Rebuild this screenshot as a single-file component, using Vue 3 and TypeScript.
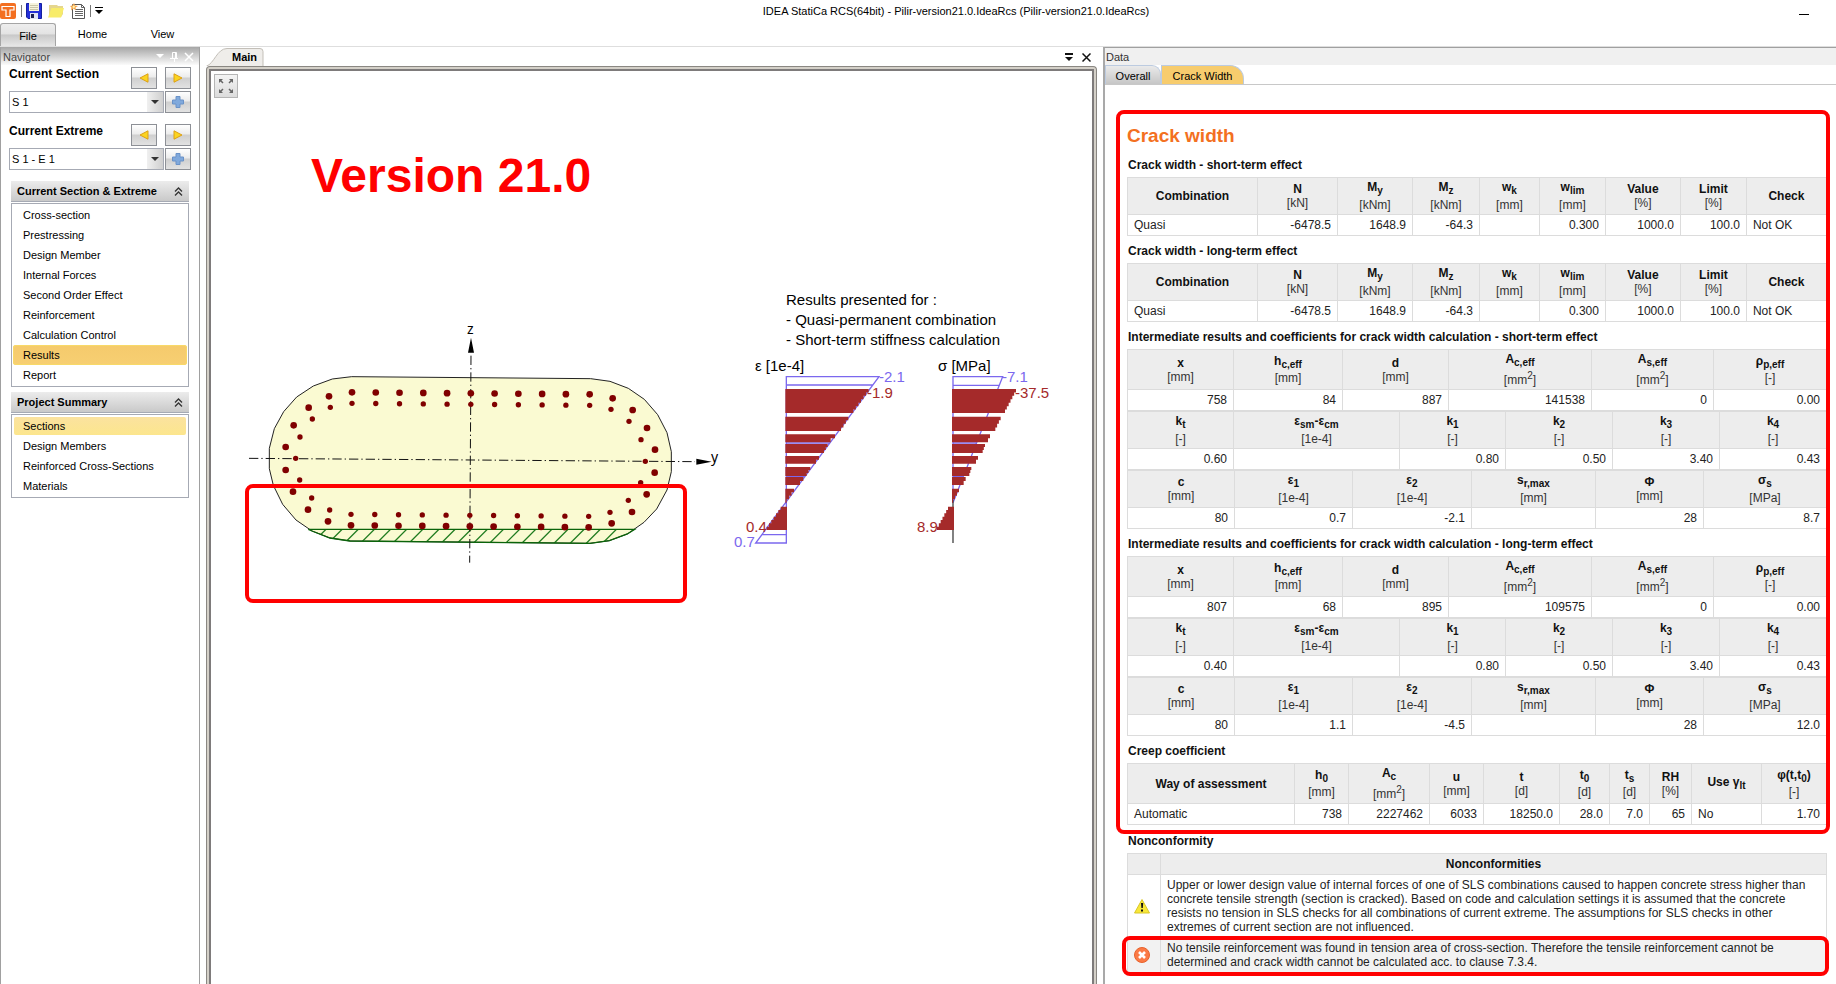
<script setup lang="ts">
import { ref } from 'vue'

type Point = [number, number]
interface Column { name: string; unit?: string; width: number }
interface ResultTable { columns: Column[]; row: string[] }
interface ResultSection { title: string; tables: ResultTable[] }

const section = ref('S 1')
const extreme = ref('S 1 - E 1')

const groups = [
  {
    title: 'Current Section & Extreme',
    active: 'Results',
    style: 'strong',
    items: ['Cross-section', 'Prestressing', 'Design Member', 'Internal Forces', 'Second Order Effect', 'Reinforcement', 'Calculation Control', 'Results', 'Report'],
  },
  {
    title: 'Project Summary',
    active: 'Sections',
    style: 'soft',
    items: ['Sections', 'Design Members', 'Reinforced Cross-Sections', 'Materials'],
  },
]

// Subscripts are written between tildes, superscripts between carets.
function parts(text: string): { text: string; kind: string }[] {
  return text
    .split(/(~[^~]+~|\^[^^]+\^)/)
    .filter((t) => t !== '')
    .map((t) => {
      if (t[0] === '~') return { text: t.slice(1, -1), kind: 'sub' }
      if (t[0] === '^') return { text: t.slice(1, -1), kind: 'sup' }
      return { text: t, kind: 'span' }
    })
}

function columns(...defs: [string, string, number][]): Column[] {
  return defs.map(([name, unit, width]) => ({ name, unit, width }))
}

function share(table: ResultTable, width: number): string {
  const total = table.columns.reduce((sum, c) => sum + c.width, 0)
  return `${(width / total) * 100}%`
}

const crackColumns = columns(
  ['Combination', '', 130], ['N', 'kN', 80], ['M~y~', 'kNm', 75], ['M~z~', 'kNm', 67], ['w~k~', 'mm', 60],
  ['w~lim~', 'mm', 66], ['Value', '%', 75], ['Limit', '%', 66], ['Check', '', 80],
)
const geometryColumns = columns(
  ['x', 'mm', 106], ['h~c,eff~', 'mm', 109], ['d', 'mm', 106], ['A~c,eff~', 'mm^2^', 143], ['A~s,eff~', 'mm^2^', 122], ['ρ~p,eff~', '-', 113],
)
const factorColumns = columns(
  ['k~t~', '-', 106], ['ε~sm~-ε~cm~', '1e-4', 166], ['k~1~', '-', 106], ['k~2~', '-', 107], ['k~3~', '-', 107], ['k~4~', '-', 107],
)
const strainColumns = columns(
  ['c', 'mm', 107], ['ε~1~', '1e-4', 118], ['ε~2~', '1e-4', 119], ['s~r,max~', 'mm', 124], ['Φ', 'mm', 108], ['σ~s~', 'MPa', 123],
)
const creepColumns = columns(
  ['Way of assessment', '', 167], ['h~0~', 'mm', 54], ['A~c~', 'mm^2^', 81], ['u', 'mm', 54], ['t', 'd', 76], ['t~0~', 'd', 50],
  ['t~s~', 'd', 40], ['RH', '%', 42], ['Use γ~lt~', '', 70], ['φ(t,t~0~)', '-', 65],
)
const crackRow = ['Quasi', '-6478.5', '1648.9', '-64.3', '', '0.300', '1000.0', '100.0', 'Not OK']

const sections: ResultSection[] = [
  { title: 'Crack width - short-term effect', tables: [{ columns: crackColumns, row: crackRow }] },
  { title: 'Crack width - long-term effect', tables: [{ columns: crackColumns, row: crackRow }] },
  {
    title: 'Intermediate results and coefficients for crack width calculation - short-term effect',
    tables: [
      { columns: geometryColumns, row: ['758', '84', '887', '141538', '0', '0.00'] },
      { columns: factorColumns, row: ['0.60', '', '0.80', '0.50', '3.40', '0.43'] },
      { columns: strainColumns, row: ['80', '0.7', '-2.1', '', '28', '8.7'] },
    ],
  },
  {
    title: 'Intermediate results and coefficients for crack width calculation - long-term effect',
    tables: [
      { columns: geometryColumns, row: ['807', '68', '895', '109575', '0', '0.00'] },
      { columns: factorColumns, row: ['0.40', '', '0.80', '0.50', '3.40', '0.43'] },
      { columns: strainColumns, row: ['80', '1.1', '-4.5', '', '28', '12.0'] },
    ],
  },
  { title: 'Creep coefficient', tables: [{ columns: creepColumns, row: ['Automatic', '738', '2227462', '6033', '18250.0', '28.0', '7.0', '65', 'No', '1.70'] }] },
]

const isTall = (table: ResultTable) => table.columns.some((c) => c.unit === 'mm^2^')
const isNumber = (value: string) => /^-?[\d.]+$/.test(value)

// Reinforcement bars of the section: straight runs and rounded ends.
const run = (x: number, y: number): Point[] => Array.from({ length: 11 }, (_, i) => [x + 71.3 * i, y + 0.6 * i] as Point)
const largeBars: Point[] = [
  ...run(336, 277), ...run(333, 676),
  [267, 289], [206, 323], [161, 376], [137, 441], [137, 510], [159, 575], [204, 629], [264, 664],
  [1118, 295], [1178, 330], [1221, 384], [1245, 449], [1244, 518], [1220, 583], [1176, 636], [1115, 670],
]
const smallBars: Point[] = [
  ...run(336, 310), ...run(333, 643),
  [271, 322], [217, 357], [180, 411], [167, 475], [179, 540], [215, 594], [269, 630],
  [1113, 328], [1167, 364], [1203, 419], [1216, 484], [1202, 548], [1165, 601], [1110, 637],
]
const hatch = Array.from({ length: 19 }, (_, i) => 258 + 48.4 * i)

// A block of stepped bars between an axis and a sloping edge.
function block(axis: number, y0: number, y1: number, x0: number, x1: number): string {
  const steps = Math.max(2, Math.round((y1 - y0) / 10))
  const points: string[] = [`${axis},${y0}`]
  for (let i = 0; i < steps; i++) {
    const x = x0 + ((x1 - x0) * i) / (steps - 1)
    points.push(`${x},${y0 + ((y1 - y0) * i) / steps}`, `${x},${y0 + ((y1 - y0) * (i + 1)) / steps}`)
  }
  points.push(`${axis},${y1}`)
  return points.join(' ')
}
const bands: Point[] = [[327, 399], [410, 453], [463, 487], [492, 519], [528, 551], [561, 588], [591, 615], [626, 668]]
const strainEdges: Point[] = [[446, 400], [385, 363], [345, 332], [323, 312], [297, 288], [271, 260], [250, 240], [222, 200]]
const stressEdges: Point[] = [[888, 855], [842, 826], [810, 804], [795, 788], [774, 768], [754, 748], [737, 731], [717, 699]]
const blocks = [
  ...bands.map(([a, b], i) => block(196, a, b, ...strainEdges[i])),
  ...bands.map(([a, b], i) => block(696, a, b, ...stressEdges[i])),
  block(201, 680, 750, 182, 140),
  block(702, 680, 750, 684, 651),
]
</script>

<template>
  <div class="app">
    <header class="titlebar">
      <div class="quick">
        <svg class="ico" width="16" height="16" viewBox="0 0 16 16">
          <rect width="16" height="16" rx="2" fill="#f36f21" />
          <path d="M2 3.500h12v3.500h-4v6.500h-4v-6.500h-4z" fill="none" stroke="#fff" stroke-width="1.200" />
        </svg>
        <i class="sep"></i>
        <button class="tool" aria-label="Save">
          <svg width="16" height="16" viewBox="0 0 16 16">
            <path d="M.5.5h15v15H2L.5 14z" fill="#2430d8" stroke="#1420a0" />
            <rect x="3" y="0" width="10" height="8" fill="#f6f3dc" />
            <path d="M4 2.500h8M4 4.500h8M4 6.500h8" stroke="#c9c6a8" />
            <rect x="4" y="10" width="8" height="6" fill="#dfe3f4" />
            <rect x="5" y="11" width="3" height="4" fill="#1b1f50" />
          </svg>
        </button>
        <button class="tool" aria-label="Open">
          <svg width="16" height="16" viewBox="0 0 16 16">
            <path d="M1 2h8l1 1h5v8l-2 3H1z" fill="#e5d68e" />
            <path d="M3.500 5H16l-3 9.500H0z" fill="#f8ec6a" />
          </svg>
        </button>
        <button class="tool" aria-label="Report">
          <svg width="16" height="16" viewBox="0 0 16 16">
            <path d="M2.500 1.500h9l3 3v11h-12z" fill="#fff" stroke="#555" />
            <path d="M11.500 1.500v3h3M5 6.500h8M5 8.500h8M5 10.500h8M5 12.500h8" fill="none" stroke="#666" />
            <path d="M4 0l1 2.500L8 3 5.500 4.500 6 7.500 3.500 5.500 1 7.500 1.500 4.500 0 3l2.500-.5z" fill="#f7a64a" />
            <circle cx="3.700" cy="3.800" r="1.200" fill="#fff3b0" />
          </svg>
        </button>
        <i class="sep"></i>
        <button class="tool more" aria-label="Customize toolbar">
          <svg width="8" height="8" viewBox="0 0 8 8"><path d="M0 0h8v1H0zM0 3h8L4 7z" fill="#000" /></svg>
        </button>
      </div>
      <h1 class="caption">IDEA StatiCa RCS(64bit) - Pilir-version21.0.IdeaRcs (Pilir-version21.0.IdeaRcs)</h1>
      <button class="minimize" aria-label="Minimize"><i></i></button>
    </header>

    <nav class="ribbon">
      <button class="file">File</button>
      <button class="tab">Home</button>
      <button class="tab">View</button>
    </nav>

    <div class="workspace">
      <aside class="navigator">
        <div class="panel-head">
          <span>Navigator</span>
          <span class="head-icons">
            <svg width="38" height="10" viewBox="0 0 38 10" fill="none" stroke="#fff">
              <path d="M0 2h8L4 6z" fill="#fff" stroke="none" />
              <path d="M16.500 6V.5h4V6M14 6.500h8M18.500 7v3M19.500 1v5" />
              <path d="M29 1l8 8M37 1l-8 8" stroke-width="1.500" />
            </svg>
          </span>
        </div>
        <div class="picker">
          <label for="section">Current Section</label>
          <div class="steps">
            <button aria-label="Previous section"><svg width="10" height="10" viewBox="0 0 10 10"><path d="M9 .8v8.400L1 5z" fill="#fbd420" stroke="#dca018" /></svg></button>
            <button aria-label="Next section"><svg width="10" height="10" viewBox="0 0 10 10"><path d="M1 .8v8.400L9 5z" fill="#fbd420" stroke="#dca018" /></svg></button>
          </div>
          <div class="drop">
            <select id="section" v-model="section"><option>S 1</option></select>
            <i class="arrow"></i>
          </div>
          <button aria-label="Add section"><svg width="14" height="14" viewBox="0 0 14 14"><path d="M5 1.500h4v3.500h3.500v4H9v3.500H5V9H1.500V5H5z" fill="#80a9dc" stroke="#6a92c8" /></svg></button>
        </div>
        <div class="picker">
          <label for="extreme">Current Extreme</label>
          <div class="steps">
            <button aria-label="Previous extreme"><svg width="10" height="10" viewBox="0 0 10 10"><path d="M9 .8v8.400L1 5z" fill="#fbd420" stroke="#dca018" /></svg></button>
            <button aria-label="Next extreme"><svg width="10" height="10" viewBox="0 0 10 10"><path d="M1 .8v8.400L9 5z" fill="#fbd420" stroke="#dca018" /></svg></button>
          </div>
          <div class="drop">
            <select id="extreme" v-model="extreme"><option>S 1 - E 1</option></select>
            <i class="arrow"></i>
          </div>
          <button aria-label="Add extreme"><svg width="14" height="14" viewBox="0 0 14 14"><path d="M5 1.500h4v3.500h3.500v4H9v3.500H5V9H1.500V5H5z" fill="#80a9dc" stroke="#6a92c8" /></svg></button>
        </div>
        <section v-for="group in groups" :key="group.title" class="group">
          <button class="group-head">
            <span>{{ group.title }}</span>
            <svg width="9" height="9" viewBox="0 0 9 9"><path d="M1 4.500L4.500 1 8 4.500M1 8.500L4.500 5 8 8.500" fill="none" stroke="#333" stroke-width="1.300" /></svg>
          </button>
          <ul>
            <li v-for="item in group.items" :key="item">
              <a href="#" :class="item === group.active ? group.style : ''">{{ item }}</a>
            </li>
          </ul>
        </section>
      </aside>

      <main class="document">
        <div class="doc-tabs">
          <button class="doc-tab">
            <svg class="tab-shape" width="58" height="19" viewBox="0 0 58 19">
              <path d="M.5 19C8 17 11 1.500 21 1.500h33q3 0 3 3V19" fill="#efedea" stroke="#c3bfb8" />
            </svg>
            <span>Main</span>
          </button>
          <div class="doc-actions">
            <button aria-label="Window list"><svg width="8" height="9" viewBox="0 0 8 9"><path d="M0 0h8v2H0zM0 4h8L4 8z" fill="#111" /></svg></button>
            <button aria-label="Close"><svg width="9" height="9" viewBox="0 0 9 9"><path d="M.5.5l8 8M8.500.5l-8 8" stroke="#111" stroke-width="1.500" /></svg></button>
          </div>
        </div>
        <div class="frame">
          <div class="canvas">
            <button class="fit" aria-label="Zoom all">
              <svg width="16" height="16" viewBox="0 0 16 16" fill="#666" stroke="#666">
                <path d="M1 1h4L1 5zM15 1h-4l4 4zM1 15h4l-4-4zM15 15h-4l4-4z" stroke="none" />
                <path d="M2 2l3 3M14 2l-3 3M2 14l3-3M14 14l-3-3" stroke-width="1.500" />
              </svg>
            </button>
            <svg class="drawing" viewBox="211 71 881 913">
              <defs>
                <clipPath id="tension"><path d="M205 688H1184L1162 702 1108 722 1050 730 330 723 270 714 216 693z" /></clipPath>
              </defs>
              <text class="version" x="311" y="192">Version 21.0</text>
              <g transform="translate(240 300) scale(.33333)">
                <path
                  d="M335 230L1052 236 1110 244 1165 265 1213 298 1253 344 1281 398 1294 455V515L1281 570 1250 627 1212 667 1162 702 1108 722 1050 730 330 723 270 714 216 693 168 660 128 613 100 556 88 506V445L103 386 131 335 170 291 220 258 277 237z"
                  fill="#fafad2" stroke="#222" stroke-width="3"
                />
                <g clip-path="url(#tension)" stroke="#1e7b1e" stroke-width="4">
                  <path v-for="x in hatch" :key="x" :d="`M${x} 688l-46 46`" />
                </g>
                <path d="M205 688H1184L1162 702 1108 722 1050 730 330 723 270 714 216 693z" fill="none" stroke="#0a640a" stroke-width="4" />
                <g stroke="#111" stroke-width="3" stroke-dasharray="28 9 4 9">
                  <path d="M693 167L689 788" />
                  <path d="M27 475L1365 485" />
                </g>
                <path d="M693 113l-9 45h18zM1415 485l-46-9v18z" />
                <g fill="#800000">
                  <circle v-for="([x, y], i) in largeBars" :key="`l${i}`" :cx="x" :cy="y" r="10" />
                  <circle v-for="([x, y], i) in smallBars" :key="`s${i}`" :cx="x" :cy="y" r="8" />
                </g>
              </g>
              <g class="axis-name">
                <text x="467" y="334">z</text>
                <text x="711" y="462">y</text>
              </g>
              <rect x="247" y="486" width="438" height="115" rx="6" fill="none" stroke="#f00" stroke-width="4" />
              <g transform="translate(720 280) scale(.33333)">
                <g fill="none" stroke="#7b68ee" stroke-width="4">
                  <path d="M199 290H477L107 789H199zM199 315H459M199 489H330M199 590H254M199 764H126" />
                  <path d="M699 668V290H848zM699 316H838M699 489H770M699 590H730" />
                </g>
                <path d="M699 660V789" stroke="#444" stroke-width="4" />
                <polygon v-for="(points, i) in blocks" :key="i" :points="points" fill="#a52a2a" />
              </g>
              <g class="notes">
                <text x="786" y="305">Results presented for :</text>
                <text x="786" y="325">- Quasi-permanent combination</text>
                <text x="786" y="345">- Short-term stiffness calculation</text>
                <text x="755" y="371">ε [1e-4]</text>
                <text x="938" y="371">σ [MPa]</text>
                <g fill="#7b68ee">
                  <text x="879" y="382">-2.1</text>
                  <text x="734" y="547">0.7</text>
                  <text x="1002" y="382">-7.1</text>
                </g>
                <g fill="#a52a2a">
                  <text x="867" y="398">-1.9</text>
                  <text x="746" y="532">0.4</text>
                  <text x="1015" y="398">-37.5</text>
                  <text x="917" y="532">8.9</text>
                </g>
              </g>
            </svg>
          </div>
        </div>
      </main>

      <section class="data">
        <div class="data-head">Data</div>
        <div class="data-tabs">
          <button class="data-tab">Overall</button>
          <button class="data-tab current">Crack Width</button>
        </div>
        <div class="data-body">
          <div class="report">
            <h2>Crack width</h2>
            <template v-for="part in sections" :key="part.title">
              <h3>{{ part.title }}</h3>
              <table v-for="(table, t) in part.tables" :key="t" :class="{ tall: isTall(table) }">
                <colgroup>
                  <col v-for="(column, c) in table.columns" :key="c" :style="{ width: share(table, column.width) }" />
                </colgroup>
                <thead>
                  <tr>
                    <th v-for="(column, c) in table.columns" :key="c" scope="col">
                      <component :is="p.kind" v-for="(p, i) in parts(column.name)" :key="i">{{ p.text }}</component>
                      <div v-if="column.unit" class="unit">[<component :is="p.kind" v-for="(p, i) in parts(column.unit)" :key="i">{{ p.text }}</component>]</div>
                    </th>
                  </tr>
                </thead>
                <tbody>
                  <tr>
                    <td v-for="(value, v) in table.row" :key="v" :class="{ number: isNumber(value) }">{{ value }}</td>
                  </tr>
                </tbody>
              </table>
            </template>
            <div class="mark mark-report"></div>
          </div>
          <div class="issues">
            <h3>Nonconformity</h3>
            <table>
              <colgroup><col class="icon-col" /><col /></colgroup>
              <thead>
                <tr><th></th><th scope="col">Nonconformities</th></tr>
              </thead>
              <tbody>
                <tr>
                  <td class="icon">
                    <svg width="16" height="16" viewBox="0 0 16 16">
                      <path d="M8 1.500L15.500 15H.5z" fill="#f8e739" stroke="#d8c62a" stroke-linejoin="round" />
                      <path d="M7 5h2.200l-.4 5H7.400zM7 11.500h2v2H7z" fill="#111" />
                    </svg>
                  </td>
                  <td>Upper or lower design value of internal forces of one of SLS combinations caused to happen concrete stress higher than concrete tensile strength (section is cracked). Based on code and calculation settings it is assumed that the concrete resists no tension in SLS checks for all combinations of current extreme. The assumptions for SLS checks in other extremes of current section are not influenced.</td>
                </tr>
                <tr class="alt">
                  <td class="icon">
                    <svg width="16" height="16" viewBox="0 0 16 16">
                      <circle cx="8" cy="8" r="7.500" fill="#fb7a45" stroke="#e8622c" />
                      <path d="M5 5l6 6M11 5l-6 6" stroke="#fff" stroke-width="2.600" />
                    </svg>
                  </td>
                  <td>No tensile reinforcement was found in tension area of cross-section. Therefore the tensile reinforcement cannot be determined and crack width cannot be calculated acc. to clause 7.3.4.</td>
                </tr>
              </tbody>
            </table>
            <div class="mark mark-issue"></div>
          </div>
        </div>
      </section>
    </div>
  </div>
</template>

<style>
body { margin: 0; background: #fff; overflow: hidden; }
</style>

<style scoped>
.app { display: flex; flex-direction: column; height: 100vh; overflow: hidden; background: #fff; color: #000; font: 11px/14px "Liberation Sans", Arial, sans-serif; }
.app *, .app *::before { box-sizing: border-box; }
button { margin: 0; padding: 0; border: 0; background: none; font: inherit; color: inherit; }
svg { display: block; }

.titlebar { display: grid; grid-template-columns: 1fr auto 1fr; align-items: start; height: 23px; }
.quick { display: flex; align-items: center; padding-top: 3px; height: 19px; }
.sep { width: 1px; height: 12px; margin: 0 4px 0 5px; background: #777; }
.tool { margin-right: 6px; width: 16px; height: 16px; }
.tool + .sep { margin-left: -2px; }
.more { width: 8px; height: 8px; }
.caption { margin: 0; padding: 4px 0 0 76px; font-size: 11px; font-weight: 400; }
.minimize { justify-self: end; width: 34px; height: 20px; margin-right: 15px; display: flex; justify-content: center; align-items: center; }
.minimize i { width: 10px; height: 1px; margin-top: 8px; background: #000; }

.ribbon { display: flex; height: 24px; border-bottom: 1px solid #dedede; }
.file { width: 56px; border: 1px solid #a5a5a5; border-bottom: 0; border-radius: 3px 3px 0 0; background: linear-gradient(#eee, #e3e3e3 45%, #c9c9c9 50%, #e6e6e6); padding-top: 2px; }
.tab { margin-left: 23px; padding-bottom: 1px; width: 27px; height: 22px; display: flex; justify-content: center; align-items: center; }
.tab + .tab { margin-left: 43px; }

.workspace { flex: 1; min-height: 0; display: grid; grid-template-columns: 200px minmax(0, 903fr) minmax(0, 733fr); }

.navigator { border: 1px solid #a0a0a0; border-width: 0 1px; }
.panel-head { display: flex; justify-content: space-between; align-items: center; height: 18px; padding: 2px 5px 0 2px; background: linear-gradient(#a6a6a6, #fbfbfb); color: #444; }
.picker { display: grid; grid-template-columns: 1fr 26px; gap: 2px 1px; padding: 2px 8px 9px 8px; }
.picker label { grid-column: 1; grid-row: 1; font-size: 12px; font-weight: 700; }
.steps { grid-column: 1 / 3; grid-row: 1; justify-self: end; display: flex; gap: 8px; }
.picker button { display: flex; justify-content: center; align-items: center; width: 26px; height: 22px; border: 1px solid #8d9096; background: linear-gradient(#fff, #ececec 45%, #cfcfcf 50%, #e2e2e2); }
.drop { position: relative; height: 22px; }
.drop select { appearance: none; width: 100%; height: 22px; padding: 0 20px 0 2px; border: 1px solid #a6aab4; border-radius: 0; background: #fff; font: inherit; color: #000; }
.arrow { position: absolute; top: 1px; right: 1px; bottom: 1px; width: 16px; background: linear-gradient(90deg, #f0f0f0, #cfcfcf); pointer-events: none; }
.arrow::before { content: ""; position: absolute; left: 4px; top: 8px; border: 4px solid transparent; border-top-color: #333; border-bottom: 0; }

.group { margin: 0 10px 5px; }
.picker + .group { margin-top: 2px; }
.group-head { display: flex; justify-content: space-between; align-items: center; width: 100%; height: 21px; padding: 0 6px; border-bottom: 1px solid #a6aab4; background: linear-gradient(#ececec, #c9c9c9); font-weight: 700; }
.group ul { margin: 1px 0 0; padding: 1px; border: 1px solid #a6aab4; list-style: none; }
.group li { height: 20px; }
.group a { display: block; height: 20px; padding: 3px 10px; color: #000; text-decoration: none; }
.group a.strong { border-radius: 3px; background: linear-gradient(#f5ca6c, #f7cf72); box-shadow: inset 0 0 0 1px #f8d968; }
.group a.soft { border-radius: 3px; background: linear-gradient(#fbe2a0, #fce68c); background-clip: content-box; padding: 1px; line-height: 18px; text-indent: 9px; }

.document { display: flex; flex-direction: column; padding: 0 6px; }
.doc-tabs { display: flex; justify-content: space-between; height: 19px; }
.doc-tab { position: relative; width: 58px; height: 19px; padding-left: 26px; font-weight: 700; text-align: left; }
.tab-shape { position: absolute; left: 0; top: 0; }
.doc-tab span { position: relative; }
.doc-actions { display: flex; gap: 9px; align-items: center; padding: 2px 6px 0 0; }
.frame { flex: 1; min-height: 0; padding: 2px 2px 0; border: 1px solid #8a8782; border-bottom: 0; border-radius: 4px 4px 0 0; background: #d4d0c8; }
.canvas { position: relative; height: 100%; border: 2px solid #7e7b7b; border-bottom: 0; background: #fff; overflow: hidden; }
.drawing { width: 100%; }
.fit { position: absolute; left: 3px; top: 3px; width: 24px; height: 24px; display: flex; justify-content: center; align-items: center; border: 1px solid #b5b5b5; background: linear-gradient(#f4f4f4, #dcdcdc); }
.version { font: 700 48px "Liberation Sans", Arial, sans-serif; fill: #f00; }
.notes { font: 15px "Liberation Sans", Arial, sans-serif; }
.axis-name { font: 14px "Noto Sans", sans-serif; }

.data { border-left: 2px solid #a9a9a9; border-top: 1px solid #a0a0a0; overflow: hidden; }
.data-head { height: 17px; padding: 2px 1px 0; background: #f0f0f0; color: #333; }
.data-tabs { display: flex; height: 20px; border-bottom: 1px solid #c8c8c8; }
.data-tab { width: 56px; border: 1px solid #bccbe0; border-bottom: 0; border-radius: 0 9px 0 0; background: linear-gradient(#eaeaea, #c6c6c6); padding-top: 1px; }
.data-tab.current { width: 83px; border-radius: 0 14px 0 0; background: #f7cc6d; }
.data-body { padding: 40px 9px 0 22px; font-size: 12px; color: #222; }
.report { position: relative; padding-bottom: 1px; }
.issues { position: relative; }
h2 { margin: 0 0 3px; font-size: 19px; line-height: 22px; color: #f37021; }
h3 { margin: 0; padding: 8px 1px 5px; font-size: 12px; line-height: 14px; color: #111; }
table { width: 100%; table-layout: fixed; border-collapse: collapse; line-height: 14px; }
th, td { padding: 0 6px; border: 1px solid #dcdcdc; }
th { background: #ededed; color: #111; }
.report th { height: 37px; padding: 0; }
.report .tall th { height: 40px; }
.report td { height: 21px; }
.number { text-align: right; }
.unit { font-weight: 400; color: #333; }
sub, sup { font-size: 10px; line-height: 12px; }
.icon-col { width: 33px; }
.issues th { height: 21px; }
.issues td { padding: 3px 6px; }
.issues td.icon svg { width: 16px; }
.alt { background: #f2f2f2; }
.mark { position: absolute; border: 4px solid #f00; border-radius: 8px; pointer-events: none; }
.mark-report { inset: -15px -3px -8px -11px; }
.mark-issue { left: -5px; right: -2px; bottom: -3px; height: 40px; }
</style>
